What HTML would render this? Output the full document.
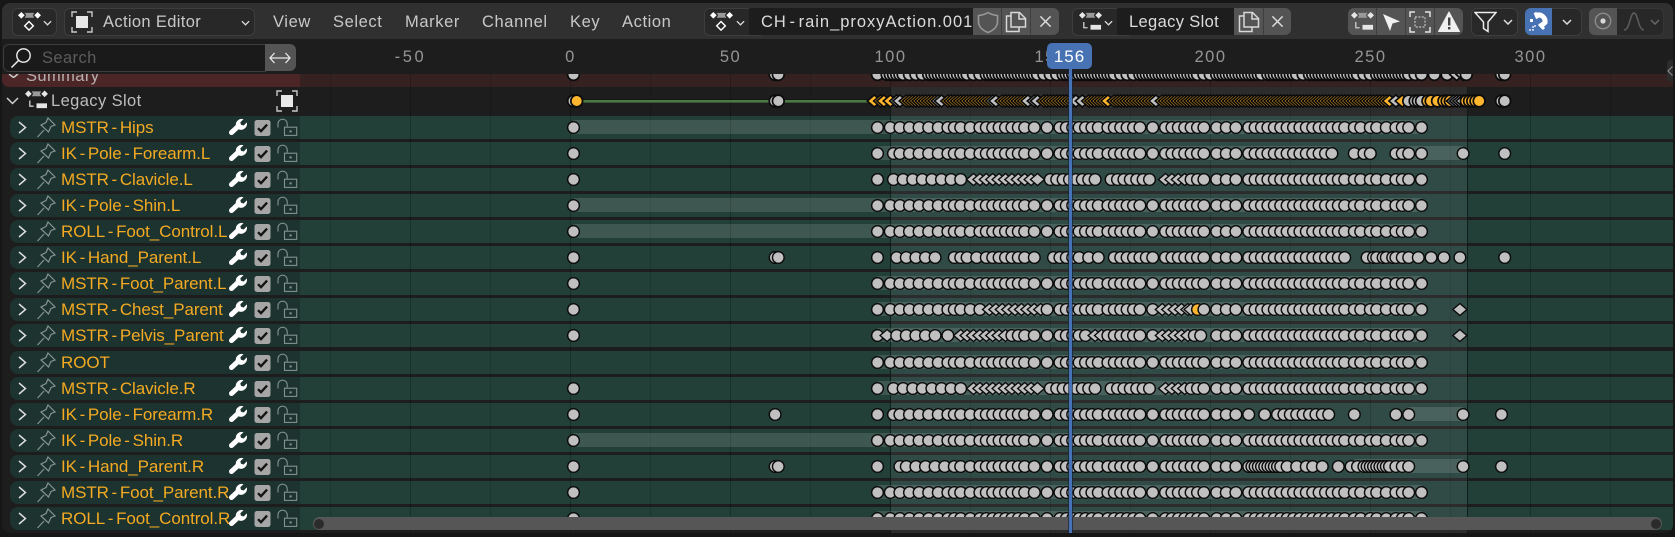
<!DOCTYPE html>
<html><head><meta charset="utf-8"><style>
html,body{margin:0;padding:0;background:#161616}
body{width:1675px;height:537px;overflow:hidden;position:relative;font-family:"Liberation Sans",sans-serif}
#ed{position:absolute;left:0;top:0;width:1675px;height:537px;background:#1d1d1d;clip-path:inset(3px 2px 4px 2px round 8px);overflow:hidden}
#ed div,#ed span,#ed svg.i{position:absolute}
.hd{left:0;top:0;width:1675px;height:39px;background:#303030}
.m{top:12px;font-size:16.5px;color:#c8c8c8;letter-spacing:.6px;line-height:20px;white-space:nowrap}
.dd{top:8px;height:26px;background:#282828;border:1px solid #3d3d3d;border-radius:6px;box-sizing:content-box}
.b{top:8px;height:27px;background:#545454}
.f{top:8px;height:27px;background:#1d1d1d}
.rl{top:46px;font-size:16.5px;color:#959595;letter-spacing:1.5px;line-height:22px;transform:translateX(-50%);white-space:nowrap}
.r{left:300px;width:1375px;height:23px;background:#223f38}
.l{left:10px;width:290px;height:23px;background:#1c332f;border-radius:8px 0 0 8px}
.l span{left:51px;top:1px;font-size:17px;line-height:21px;color:#f4aa22;letter-spacing:-.08px;white-space:nowrap}
i{font-style:normal;margin:0 2.7px}
.l svg{position:absolute}
</style></head><body>
<svg width="0" height="0" style="position:absolute"><defs>
<symbol id="dope" viewBox="0 0 24 22"><path d="M3.5 0.5L7 4 3.5 7.5 0 4zM20.5 0.5L24 4 20.5 7.5 17 4z" fill="#fff"/><path d="M7 1.5H17L15.5 4 17 6.5H7L8.5 4z" fill="#999"/><path d="M11.5 10.5L16 15 11.5 19.5 7 15z" fill="none" stroke="#fff" stroke-width="1.5"/></symbol>
<symbol id="slot" viewBox="0 0 24 22"><path d="M3.5 0.5L7 4 3.5 7.5 0 4zM20.5 0.5L24 4 20.5 7.5 17 4z" fill="#e6e6e6"/><path d="M7 1.5H17L15.5 4 17 6.5H7L8.5 4z" fill="#999"/><path d="M5 11V17H9" fill="none" stroke="#ccc" stroke-width="1.4"/><rect x="12" y="14" width="11" height="5" fill="#e6e6e6"/></symbol>
<symbol id="mode" viewBox="0 0 22 22"><rect x="5" y="5" width="12" height="12" fill="#e8e8e8"/><path d="M1 6V1H6M16 1H21V6M21 16V21H16M6 21H1V16" fill="none" stroke="#c8c8c8" stroke-width="1.4"/></symbol>
<symbol id="chev" viewBox="0 0 10 6"><path d="M1 1L5 5 9 1" fill="none" stroke="#ddd" stroke-width="1.5"/></symbol>
<symbol id="pin" viewBox="0 0 20 21"><path d="M1.5 20L8 13M12 1L19 8 15 9.5 12.5 15 5 8 10 5.5z" fill="none" stroke="#87948f" stroke-width="1.2"/></symbol>
<symbol id="wr" viewBox="0 0 19 18"><path d="M3 14.5L10 8" stroke="#fff" stroke-width="5" stroke-linecap="round"/><path d="M7.5 8.5A6 6 0 0 1 15 1.2L11.8 4.2 12.5 6.8 15.2 7.5 18.3 4.4A6 6 0 0 1 10.5 11.5z" fill="#fff"/></symbol>
<symbol id="chk" viewBox="0 0 16 16"><rect width="16" height="16" rx="2.5" fill="#a6a6a6"/><path d="M3.5 8.2L6.5 11.2 12.6 4.6" fill="none" stroke="#141414" stroke-width="2.4"/></symbol>
<symbol id="lock" viewBox="0 0 21 19"><path d="M1.5 9.5V5.8A4.6 4.6 0 0 1 10.7 5.8V8.5" fill="none" stroke="#82938e" stroke-width="1.1"/><rect x="8" y="9.2" width="12.2" height="8.2" fill="none" stroke="#82938e" stroke-width="1.1"/><rect x="13" y="12.4" width="2.2" height="2" fill="#82938e"/></symbol>
<symbol id="right" viewBox="0 0 9 13"><path d="M1 1L7.5 6.5 1 12" fill="none" stroke="#dcdcdc" stroke-width="1.5"/></symbol>
<symbol id="copy" viewBox="0 0 22 22"><path d="M6 5H1.5V20.5H14V16M6 1.5H14.5L20.5 7.5V16H6zM14 2V8H20" fill="none" stroke="#d8d8d8" stroke-width="1.5"/></symbol>
<symbol id="x" viewBox="0 0 14 14"><path d="M1.5 1.5L12.5 12.5M12.5 1.5L1.5 12.5" stroke="#dcdcdc" stroke-width="1.6"/></symbol>
</defs></svg>
<div id="ed">
<div class="hd"></div>

<div class="dd" style="left:12px;width:43px"></div>
<svg class="i" style="left:18px;top:11px" width="23" height="22"><use href="#dope"/></svg>
<svg class="i" style="left:43px;top:20px" width="9" height="6"><use href="#chev"/></svg>
<div class="dd" style="left:64px;width:189px"></div>
<svg class="i" style="left:71px;top:11px" width="22" height="22"><use href="#mode"/></svg>
<span class="m" style="left:103px;letter-spacing:.35px">Action Editor</span>
<svg class="i" style="left:241px;top:20px" width="9" height="6"><use href="#chev"/></svg>
<span class="m" style="left:273px">View</span>
<span class="m" style="left:333px">Select</span>
<span class="m" style="left:405px">Marker</span>
<span class="m" style="left:482px">Channel</span>
<span class="m" style="left:570px">Key</span>
<span class="m" style="left:622px">Action</span>

<div class="dd" style="left:704px;width:60px"></div>
<svg class="i" style="left:710px;top:11px" width="23" height="22"><use href="#dope"/></svg>
<svg class="i" style="left:736px;top:20px" width="9" height="6"><use href="#chev"/></svg>
<div class="f" style="left:749px;width:224px"></div>
<span class="m" style="left:761px;color:#dcdcdc;letter-spacing:.98px">CH<i>-</i>rain_proxyAction.001</span>
<div class="b" style="left:973px;width:86px;border-radius:0 6px 6px 0"></div>
<div style="left:1001px;top:8px;width:1px;height:27px;background:#3e3e3e"></div>
<div style="left:1030px;top:8px;width:1px;height:27px;background:#3e3e3e"></div>
<svg class="i" style="left:977px;top:11px" width="22" height="23" viewBox="0 0 22 23"><path d="M1.5 4.5Q7 4 11 1.5 15 4 20.5 4.5V11Q20 18 11 21.5 2 18 1.5 11z" fill="none" stroke="#979797" stroke-width="1.6"/></svg>
<svg class="i" style="left:1005px;top:11px" width="22" height="22"><use href="#copy"/></svg>
<svg class="i" style="left:1039px;top:15px" width="13" height="13"><use href="#x"/></svg>

<div class="dd" style="left:1072px;width:60px"></div>
<svg class="i" style="left:1079px;top:11px" width="23" height="22"><use href="#slot"/></svg>
<svg class="i" style="left:1104px;top:20px" width="9" height="6"><use href="#chev"/></svg>
<div class="f" style="left:1117px;width:117px"></div>
<span class="m" style="left:1129px;color:#dcdcdc;letter-spacing:.35px">Legacy Slot</span>
<div class="b" style="left:1234px;width:57px;border-radius:0 6px 6px 0"></div>
<div style="left:1263px;top:8px;width:1px;height:27px;background:#3e3e3e"></div>
<svg class="i" style="left:1238px;top:11px" width="22" height="22"><use href="#copy"/></svg>
<svg class="i" style="left:1271px;top:15px" width="13" height="13"><use href="#x"/></svg>

<div class="b" style="left:1348px;width:115px;border-radius:6px"></div>
<div style="left:1376px;top:8px;width:1px;height:27px;background:#3e3e3e"></div>
<div style="left:1405px;top:8px;width:1px;height:27px;background:#3e3e3e"></div>
<div style="left:1434px;top:8px;width:1px;height:27px;background:#3e3e3e"></div>
<svg class="i" style="left:1351px;top:11px" width="23" height="22"><use href="#slot"/></svg>
<svg class="i" style="left:1382px;top:13px" width="19" height="19" viewBox="0 0 19 19"><path d="M1 1L18 8.5 10.5 10.5 8 18z" fill="#f0f0f0"/></svg>
<svg class="i" style="left:1409px;top:11px" width="22" height="22" viewBox="0 0 22 22"><path d="M1 6V1H6M16 1H21V6M21 16V21H16M6 21H1V16" fill="none" stroke="#e4e4e4" stroke-width="1.5"/><rect x="6" y="6" width="10" height="10" fill="none" stroke="#c0c0c0" stroke-width="1.2" stroke-dasharray="2 1.4"/></svg>
<svg class="i" style="left:1438px;top:11px" width="22" height="22" viewBox="0 0 22 22"><path d="M11 1L21.5 20.5H.5z" fill="#f0f0f0" stroke="#f0f0f0" stroke-linejoin="round" stroke-width="1"/><rect x="10" y="6.5" width="2.4" height="8" fill="#444"/><rect x="10" y="16" width="2.4" height="2.4" fill="#444"/></svg>

<div class="dd" style="left:1471px;width:45px"></div>
<svg class="i" style="left:1474px;top:11px" width="23" height="22" viewBox="0 0 23 22"><path d="M1 1.5H22L14 11V20.5L9.5 17.5V11z" fill="none" stroke="#ececec" stroke-width="1.5"/></svg>
<svg class="i" style="left:1503px;top:19px" width="10" height="6"><use href="#chev"/></svg>
<div class="dd" style="left:1525px;width:55px"></div>
<div class="b" style="left:1525px;width:27px;background:#4772b3;border-radius:6px 0 0 6px"></div>
<svg class="i" style="left:1527px;top:9px" width="24" height="25" viewBox="0 0 24 25"><path d="M9 6.5A6.5 6.5 0 0 1 18 13.5L13 18" fill="none" stroke="#fff" stroke-width="5"/><path d="M8 3.5L10.5 9.5" stroke="#fff" stroke-width="3"/><path d="M12 15L17 20" stroke="#fff" stroke-width="3"/><path d="M2 21H6V17H9" fill="none" stroke="#dfe8f5" stroke-width="1.5" stroke-dasharray="2 1"/><rect x="3" y="10" width="3" height="3" fill="#fff"/></svg>
<svg class="i" style="left:1562px;top:19px" width="10" height="6"><use href="#chev"/></svg>
<div class="dd" style="left:1589px;width:73px;border-color:#363636"></div>
<div class="b" style="left:1589px;width:28px;border-radius:6px 0 0 6px"></div>
<svg class="i" style="left:1594px;top:12px" width="18" height="18" viewBox="0 0 18 18"><circle cx="9" cy="9" r="7.7" fill="none" stroke="#8c8c8c" stroke-width="1.4"/><circle cx="9" cy="9" r="2.6" fill="#d8d8d8"/></svg>
<svg class="i" style="left:1623px;top:11px" width="22" height="20" viewBox="0 0 22 20"><path d="M1 19C7 19 7 2 11 2S15 19 21 19" fill="none" stroke="#5e5e5e" stroke-width="1.5"/></svg>
<svg class="i" style="left:1650px;top:19px" width="10" height="6" opacity=".35"><use href="#chev"/></svg>

<span class="rl" style="left:410.5px;letter-spacing:2.6px">-50</span>
<span class="rl" style="left:570.5px">0</span>
<span class="rl" style="left:730.5px">50</span>
<span class="rl" style="left:890.5px">100</span>
<span class="rl" style="left:1050.5px">150</span>
<span class="rl" style="left:1210.5px">200</span>
<span class="rl" style="left:1370.5px">250</span>
<span class="rl" style="left:1530.5px">300</span>

<div style="left:2px;top:74px;width:298px;height:13px;background:#4c2627;border-radius:0 0 0 7px"></div>
<div style="left:300px;top:74px;width:1375px;height:13px;background:#362121"></div>
<div style="left:26px;top:63px;height:24px;width:100px;overflow:hidden;clip-path:inset(11px 0 0 0)"><span style="left:0;top:3px;font-size:16.5px;line-height:20px;color:#b8b0b0;letter-spacing:.4px">Summary</span></div>
<svg class="i" style="left:8px;top:74px" width="11" height="4" viewBox="0 0 11 4"><path d="M1 0L5.5 3.5 10 0" fill="none" stroke="#ccc" stroke-width="1.5"/></svg>

<svg class="i" style="left:6px;top:97px" width="13" height="8" viewBox="0 0 13 8"><path d="M1 1L6.5 6.5 12 1" fill="none" stroke="#d0d0d0" stroke-width="1.5"/></svg>
<svg class="i" style="left:25px;top:90px" width="23" height="21"><use href="#slot"/></svg>
<span class="m" style="left:51px;top:91px;color:#bdbdbd;letter-spacing:.4px">Legacy Slot</span>
<svg class="i" style="left:276px;top:90px" width="22" height="22"><use href="#mode"/></svg>

<div class="r" style="top:116px"></div><div class="r" style="top:142px"></div><div class="r" style="top:168px"></div><div class="r" style="top:194px"></div><div class="r" style="top:220px"></div><div class="r" style="top:246px"></div><div class="r" style="top:272px"></div><div class="r" style="top:298px"></div><div class="r" style="top:324px"></div><div class="r" style="top:351px"></div><div class="r" style="top:377px"></div><div class="r" style="top:403px"></div><div class="r" style="top:429px"></div><div class="r" style="top:455px"></div><div class="r" style="top:481px"></div><div class="r" style="top:507px"></div>

<div class="l" style="top:116px"><span>MSTR<i>-</i>Hips</span></div>
<div class="l" style="top:142px"><span>IK<i>-</i>Pole<i>-</i>Forearm.L</span></div>
<div class="l" style="top:168px"><span>MSTR<i>-</i>Clavicle.L</span></div>
<div class="l" style="top:194px"><span>IK<i>-</i>Pole<i>-</i>Shin.L</span></div>
<div class="l" style="top:220px"><span>ROLL<i>-</i>Foot_Control.L</span></div>
<div class="l" style="top:246px"><span>IK<i>-</i>Hand_Parent.L</span></div>
<div class="l" style="top:272px"><span>MSTR<i>-</i>Foot_Parent.L</span></div>
<div class="l" style="top:298px"><span>MSTR<i>-</i>Chest_Parent</span></div>
<div class="l" style="top:324px"><span>MSTR<i>-</i>Pelvis_Parent</span></div>
<div class="l" style="top:351px"><span>ROOT</span></div>
<div class="l" style="top:377px"><span>MSTR<i>-</i>Clavicle.R</span></div>
<div class="l" style="top:403px"><span>IK<i>-</i>Pole<i>-</i>Forearm.R</span></div>
<div class="l" style="top:429px"><span>IK<i>-</i>Pole<i>-</i>Shin.R</span></div>
<div class="l" style="top:455px"><span>IK<i>-</i>Hand_Parent.R</span></div>
<div class="l" style="top:481px"><span>MSTR<i>-</i>Foot_Parent.R</span></div>
<div class="l" style="top:507px"><span>ROLL<i>-</i>Foot_Control.R</span></div>

<svg id="ic" class="i" style="left:0;top:0" width="1675" height="537"></svg>

<div style="left:3px;top:44px;width:262px;height:26px;background:#1a1a1a;border:1px solid #3d3d3d;border-right:0;border-radius:6px 0 0 6px"></div>
<div style="left:265px;top:44px;width:31px;height:27px;background:#545454;border-radius:0 6px 6px 0"></div>
<svg class="i" style="left:10px;top:47px" width="22" height="22" viewBox="0 0 22 22"><circle cx="13.5" cy="8.5" r="6.7" fill="none" stroke="#ededed" stroke-width="1.4"/><path d="M8.5 13.5L1.5 20.5" stroke="#ededed" stroke-width="1.5"/></svg>
<span style="left:42px;top:48px;font-size:16.5px;line-height:20px;color:#5c5c5c;letter-spacing:.4px">Search</span>
<svg class="i" style="left:269px;top:52px" width="22" height="12" viewBox="0 0 22 12"><path d="M5.5 1L1 6 5.5 11M16.5 1L21 6 16.5 11M1 6H21" fill="none" stroke="#e8e8e8" stroke-width="1.3"/></svg>

<svg id="kf" class="i" style="left:0;top:0" width="1675" height="537"></svg>

<div style="left:313px;top:517px;width:1349px;height:13px;background:#565656;border-radius:7px"></div>
<div style="left:314px;top:518.5px;width:10px;height:10px;background:#2b2b2b;border-radius:50%"></div>
<div style="left:1651px;top:518.5px;width:10px;height:10px;background:#2b2b2b;border-radius:50%"></div>
<div style="left:1667px;top:60px;width:6px;height:21px;background:#2c2c2c;border-radius:3px 0 0 3px"></div>
<svg class="i" style="left:1667px;top:66px" width="6" height="10" viewBox="0 0 6 10"><path d="M5.5 .5L1 5 5.5 9.5" fill="none" stroke="#8a8a8a" stroke-width="1.2"/></svg>

<div style="left:1069px;top:68px;width:2.6px;height:470px;background:#4772b3;box-shadow:0 0 0 .7px #15233a"></div>
<div style="left:1047px;top:43px;width:45px;height:26px;background:#4772b3;border-radius:5px"></div>
<span style="left:1047px;top:47px;width:45px;text-align:center;font-size:17px;line-height:20px;color:#fff;letter-spacing:1px">156</span>
</div>
<script>
var T=[116,142,168,194,220,246,272,298,324,351,377,403,429,455,481,507];
var ic='';
T.forEach(function(t){
 ic+='<use href="#right" x="18" y="'+(t+5)+'" width="9" height="13"/>';
 ic+='<use href="#pin" x="36" y="'+(t+1)+'" width="20" height="21"/>';
 ic+='<use href="#wr" x="228.5" y="'+(t+2)+'" width="19" height="18"/>';
 ic+='<use href="#chk" x="254.5" y="'+(t+4)+'" width="16" height="16"/>';
 ic+='<use href="#lock" x="276.5" y="'+(t+2)+'" width="21" height="19"/>';
});
document.getElementById('ic').innerHTML=ic;

var X=function(f){return 570.3+3.2*f};
var tail="202 205 208 212 214 216 218-240/2 242 245 247 250 252 255 258 260 262 266";
var A="1 96 100 103-118/3 120 122 125 128 130-142/2 145 149 153 155-165/2 168-178/2 182 186-198/2 "+tail;
var A0=A.slice(2);
var B="1 96 101 103-118/3 120 122 125 128 130-142/2 145 149 153 155-165/2 168-178/2 182 186-198/2 202 205 208 212 214 216 218-238/2 245 248 250 258 260 262 266 279 292";
var C="1 96 101 104-122/3 d126-146/2 150 152 154-165/2 169-181/2 d186-192/2 194-198/2 "+tail;
var rows=[
 A,B,C,A,A,
 "1 64 65 96 102-114/3 120 122 124 127 130 132 134 136 138 140 142 145 151 153 155 157 159 162 165 170-180/2 182 186-198/2 202 205 208 212-243/2 249 251 252 254 255 257 258 260 262 265 269 273 278 292",
 A,
 "1 96 100 103-118/3 120 122 125 128 d131-147/2 149 153 155-165/2 168-178/2 182 d185-193/2 d194 o196 198 "+tail+" d278",
 "1 96 d99 102-111/3 114 118 d122-128/2 d130-136/2 138-142/2 145 149 153 155-161/2 d164 d166 168-178/2 182 d185-193/2 195-198/2 "+tail+" d278",
 A0,C,
 "1 64 96 101 103-118/3 120 122 125 128 130-142/2 145 149 153 155-165/2 168-178/2 182 186-198/2 202 205 208 212 217 221 223-238/2 245 258 262 279 291",
 A,
 "1 64 65 96 103 105-118/3 120 122 125 128 130-142/2 145 149 153 155-165/2 168-178/2 182 186-198/2 202 205 208 212-222/1 224 227 230 232 235 240 244 246 248-256/1 258 260 262 279 291",
 A,A
];
var bars={0:[[1,96],[96,266]],1:[[96,238],[262,279]],3:[[1,96],[96,266]],4:[[1,96],[96,266]],6:[[96,266]],7:[[96,266]],8:[[96,266]],9:[[96,266]],10:[[96,266]],11:[[262,279]],12:[[1,96],[96,266]],13:[[245,279]],14:[[96,266]],15:[[96,266]]};
var SW=1.4;
function shape(k,x,y){
 var fill=(k=='o'||k=='y')?'#ffb52e':'#c0c0c0';
 if(k=='d'||k=='y') return '<path d="M'+(x-7)+' '+y+'L'+x+' '+(y-6)+'L'+(x+7)+' '+y+'L'+x+' '+(y+6)+'Z" fill="'+fill+'" stroke="#0b0b0b" stroke-width="'+SW+'"/>';
 return '<circle cx="'+x+'" cy="'+y+'" r="5.85" fill="'+fill+'" stroke="#0b0b0b" stroke-width="'+SW+'"/>';
}
function draw(spec,y){
 var s='';
 spec.trim().split(/\s+/).forEach(function(t){
  var k='c',m=t.match(/^([odyc])/);
  if(m){k=m[1];t=t.slice(1)}
  var r=t.match(/^(\d+)-(\d+)\/(\d+)$/);
  if(r){
   for(var f=+r[1];f<=+r[2];f+=+r[3]){
    if(r[3]=='1'&&(k=='y'||k=='d'||k=='c')&&f%6==0&&spec.length>300&&y<110)continue;
    s+=shape(k,X(f),y);
   }
  } else s+=shape(k,X(+t),y);
 });
 return s;
}
var o='';
for(var x=330.5;x<1675;x+=80){
 var major=Math.round((x-570.5)/80)%2==0;
 o+='<rect x="'+(x-.5)+'" y="74" width="1" height="459" fill="rgba(0,0,0,'+(major?.22:.13)+')"/>';
}
o+='<rect x="890.5" y="87" width="577" height="446" fill="rgba(255,255,255,.065)"/>';
o+='<rect x="890" y="87" width="1" height="446" fill="#0e1a17" opacity=".8"/>';
o+='<rect x="1467" y="87" width="1" height="446" fill="#0e1a17" opacity=".9"/>';
for(var i in bars){bars[i].forEach(function(b){
 var a=b[1]-b[0]>170&&b[0]>50;
 o+='<rect x="'+X(b[0])+'" y="'+(T[i]+4)+'" width="'+(3.2*(b[1]-b[0]))+'" height="14" fill="rgba(255,255,255,'+(a?.055:.13)+')"/>';
})}
o+='<rect x="576" y="100" width="302" height="2.6" fill="#4c7a45"/><rect x="576" y="99.4" width="302" height=".6" fill="#111"/>';
SW=1.7;
o+='<clipPath id="cs"><rect x="300" y="74" width="1375" height="60"/></clipPath><g clip-path="url(#cs)">'+
 draw("1 64 65 96 99-104/1 106-112/2 113-124/1 126-130/2 131-146/1 148-154/2 155-170/1 172-178/2 179-196/1 198 200 202-216/1 218-226/1 227 229 231-246/1 248 250 252-262/1 264 266 270 274 d277 d279 280 291 292",74.5)+'</g>';
o+=draw("1 o2 64 65 y95 y97 y98 y100 d102 d103 y105-114/1 d115 d116 y118-131/1 d132 d133 y135-142/1 d143 d145 d146 y148-157/1 d158 d160 y162-168/1 y170-182/1 d183 y185-256/1 d258 y260 262 264 265 266 o268 o269 o271 o273 o274 o275 d276 d277 d278 d279 o280 o281 o282 o283 o284 291 292",101);
SW=1.4;
rows.forEach(function(sp,i){o+=draw(sp,T[i]+11.5)});
document.getElementById('kf').innerHTML=o;
</script>
</body></html>
